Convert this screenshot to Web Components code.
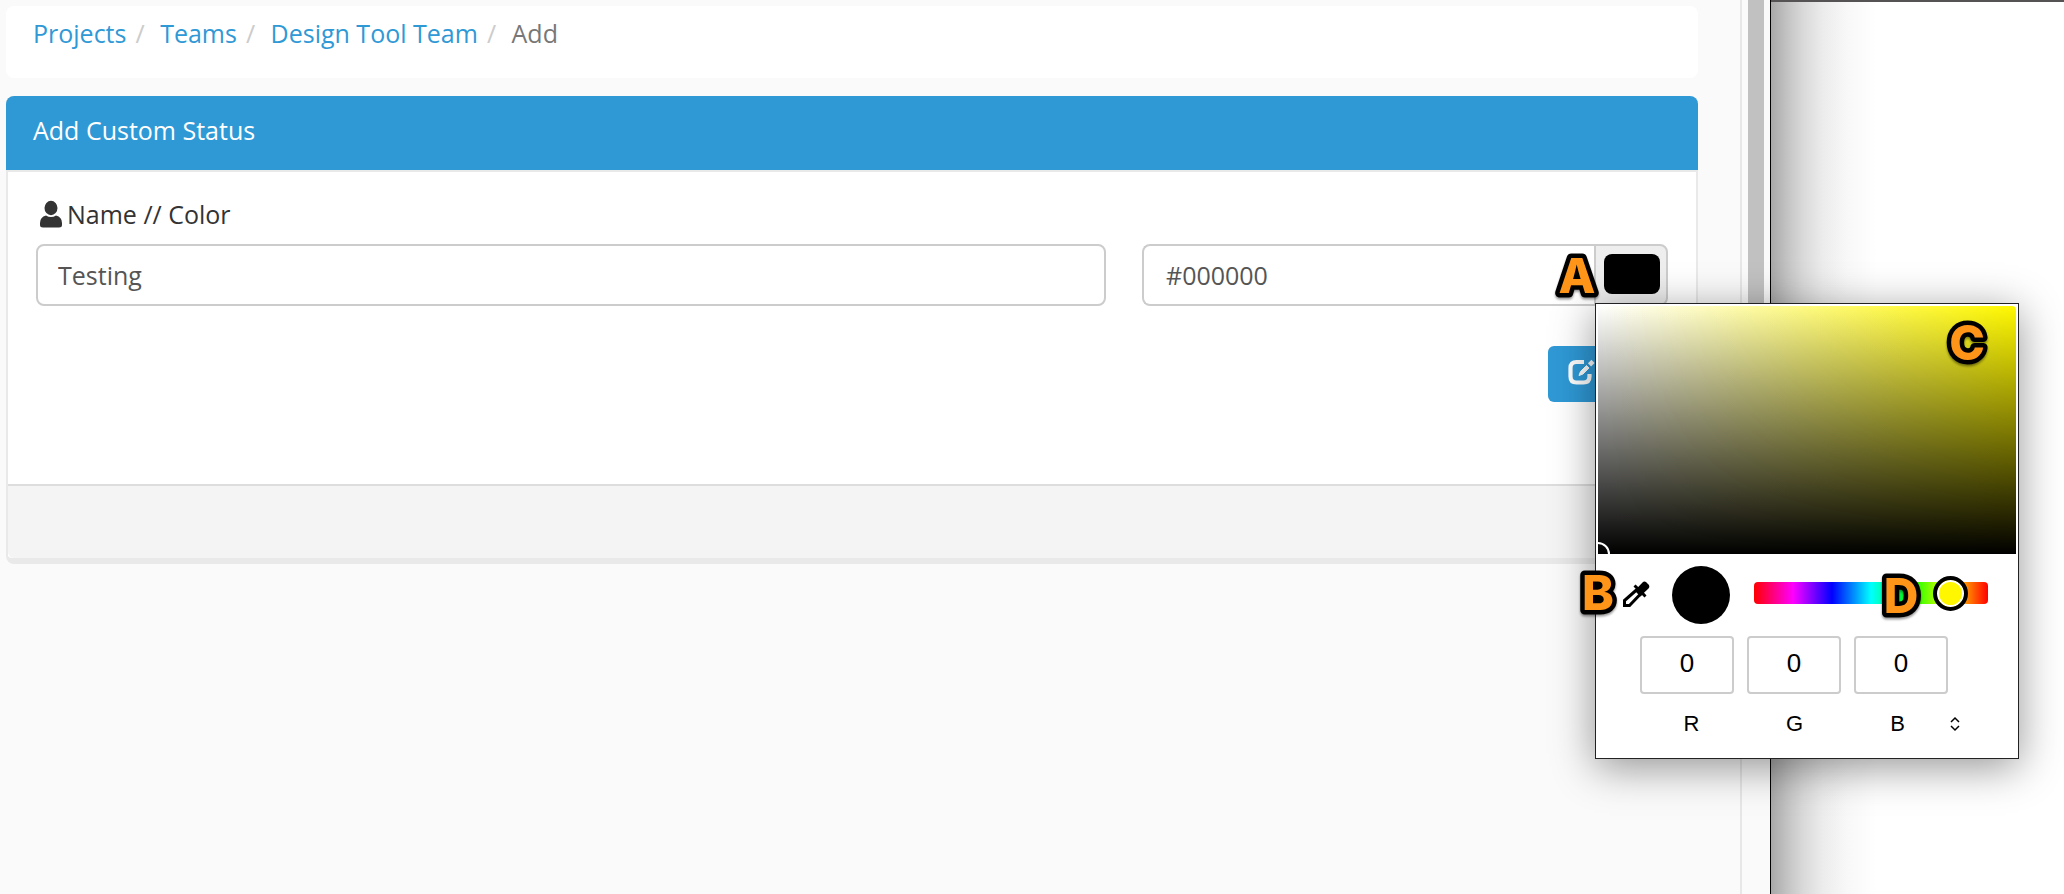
<!DOCTYPE html>
<html lang="en">
<head>
  <meta charset="UTF-8">
  <title>Add Custom Status</title>
  <style>
    body {
      margin: 0;
      background: #fff;
      font-family: "Open Sans", "Noto Sans", sans-serif;
      font-size: 25px;
      line-height: 36px;
      color: #333;
    }
  </style>
</head>
<body>
  <desktop-view>
    <bread-crumbs>
      <a href="#projects">Projects</a>
      <a href="#teams">Teams</a>
      <a href="#design">Design Tool Team</a>
      <span>Add</span>
    </bread-crumbs>
    <status-panel heading="Add Custom Status">
      <status-form></status-form>
    </status-panel>
  </desktop-view>

  <template id="desktop-view">
    <style>
      :host {
        display: flex;
        min-height: 100vh;
      }
      .window {
        flex: 1;
        display: flex;
        background: #fafafa;
        border-right: 1px solid #000;
      }
      main {
        flex: 1;
        display: flex;
        flex-direction: column;
        gap: 18px;
        padding: 6px 42px 30px 6px;
      }
      .scrollbar {
        width: 16px;
        padding: 0 6px;
        border-left: 2px solid #e7e7e7;
      }
      .thumb {
        height: 50vh;
        background: #c1c1c1;
      }
      .behind {
        width: 293px;
        border-top: 2px solid #555354;
        box-sizing: border-box;
        background: linear-gradient(90deg, #a8a8a8, #c3c3c3 16px, #d9d9d9 32px, #ececec 52px, #f8f8f8 76px, #fff 106px);
      }
    </style>
    <div class="window">
      <main><slot></slot></main>
      <div class="scrollbar"><div class="thumb"></div></div>
    </div>
    <div class="behind"></div>
  </template>

  <template id="bread-crumbs">
    <style>
      :host {
        display: block;
        background: #fff;
        border-radius: 8px;
        padding: 9px 27px 27px;
      }
      nav {
        display: flex;
      }
      ::slotted(a) {
        color: #2f99d6;
        text-decoration: none;
      }
      ::slotted(span) {
        color: #777;
      }
      i {
        padding: 0 9px;
        color: #ccc;
        font-style: normal;
      }
    </style>
    <nav aria-label="Breadcrumb"></nav>
  </template>

  <template id="status-panel">
    <style>
      :host {
        display: block;
        border: 2px solid #e9e9e9;
        border-top: 0;
        border-bottom-width: 6px;
        border-radius: 8px;
        background: #fff;
      }
      header {
        margin: 0 -2px;
        padding: 16px 27px 22px;
        background: #2f99d6;
        border-radius: 8px 8px 0 0;
        color: #fff;
      }
      h3 {
        margin: 0;
        font-size: 25px;
        font-weight: 400;
      }
      .body {
        border-top: 2px solid #e9e9e9;
        padding: 24px 28px 82px;
      }
      footer {
        height: 72px;
        background: #f4f4f4;
        border-top: 2px solid #ddd;
        border-radius: 0 0 6px 6px;
      }
    </style>
    <header><h3></h3></header>
    <div class="body"><slot></slot></div>
    <footer></footer>
  </template>

  <template id="status-form">
    <style>
      :host {
        display: block;
      }
      form {
        display: flex;
        flex-direction: column;
      }
      label {
        display: flex;
        align-items: center;
        gap: 5px;
        padding-left: 4px;
        margin-bottom: 12px;
      }
      .fields {
        display: grid;
        grid-template-columns: 1070fr 526fr;
        gap: 36px;
      }
      input {
        box-sizing: border-box;
        width: 100%;
        height: 62px;
        border: 2px solid #ccc;
        border-radius: 8px;
        padding: 0 20px;
        background: #fff;
        font: inherit;
        color: #555;
      }
      button {
        align-self: flex-end;
        display: flex;
        align-items: center;
        height: 56px;
        margin-top: 40px;
        padding: 0 20px;
        border: 0;
        border-radius: 6px;
        background: #2f99d6;
        color: #fff;
        font: inherit;
      }
      .edit {
        width: 28px;
        height: 28px;
        margin: 0 52px 4px 0;
      }
    </style>
    <form>
      <label for="name">
        <svg width="22" height="28" viewBox="0 0 22 28" fill="#333">
          <ellipse cx="11" cy="8" rx="6.5" ry="7.2"/>
          <path d="M6 15.500Q11 18.500 16 15.500Q22 17 22 23V25Q22 27.500 19 27.500H3Q0 27.500 0 25V23Q0 17 6 15.500Z"/>
        </svg>
        Name // Color
      </label>
      <div class="fields">
        <input id="name" type="text" value="Testing">
        <color-field value="#000000"></color-field>
      </div>
      <button type="button" aria-label="Add status">
        <svg class="edit" viewBox="0 0 28 28" fill="none" stroke="#fff">
          <path d="M16 4H8.500Q2.500 4 2.500 10V18.500Q2.500 24.500 8.500 24.500H15.500Q21.500 24.500 21.500 18.500V16" stroke-width="4.200"/>
          <path d="M11 17.500L12.500 13.500L18.500 7.500L21 10L15 16Z" fill="#fff" stroke-width="1"/>
          <path d="M21.500 6.800L25 3.300" stroke-width="4.500"/>
        </svg>
      </button>
    </form>
  </template>

  <template id="color-field">
    <style>
      :host {
        display: flex;
        position: relative;
      }
      input {
        flex: 1;
        min-width: 0;
        box-sizing: border-box;
        height: 62px;
        border: 2px solid #ccc;
        border-right: 0;
        border-radius: 8px 0 0 8px;
        padding: 0 20px 0 22px;
        background: #fff;
        font: inherit;
        color: #555;
      }
      .addon {
        position: relative;
        box-sizing: border-box;
        width: 74px;
        padding: 8px 6px 8px 8px;
        border: 2px solid #ccc;
        border-radius: 0 8px 8px 0;
        background: #eee;
      }
      button {
        display: block;
        width: 56px;
        height: 40px;
        border: 0;
        border-radius: 8px;
        background: #000;
      }
      /* popup hangs from the swatch, out over the window edge */
      color-picker {
        position: absolute;
        left: -1px;
        top: 57px;
        z-index: 2;
      }
      letter-mark {
        left: -49px;
        top: 3px;
      }
    </style>
    <input type="text" aria-label="Color">
    <div class="addon">
      <button type="button" aria-label="Pick a color"></button>
      <color-picker></color-picker>
      <letter-mark letter="A"></letter-mark>
    </div>
  </template>

  <template id="color-picker">
    <style>
      :host {
        display: block;
        box-sizing: border-box;
        width: 424px;
        height: 456px;
        padding: 2px;
        border: 1px solid #222;
        background: #fff;
        box-shadow: 0 8px 40px rgba(0, 0, 0, .42);
        font: 26px/30px "Liberation Sans", Arial, sans-serif;
        color: #000;
      }
      .shade {
        position: relative;
        overflow: hidden;
        height: 248px;
        border-radius: 4px 4px 0 0;
        background: linear-gradient(transparent, #000), linear-gradient(90deg, #fff, #fff700);
      }
      .handle {
        position: absolute;
        left: -12px;
        bottom: -12px;
        box-sizing: border-box;
        width: 24px;
        height: 24px;
        border: 2px solid #fff;
        border-radius: 50%;
      }
      .tools {
        display: flex;
        align-items: center;
        padding: 12px 28px 12px 23px;
      }
      .dropper {
        padding: 0;
        border: 0;
        background: none;
        width: 30px;
        height: 30px;
        margin-right: 21px;
      }
      .dropper svg {
        display: block;
      }
      .current {
        width: 58px;
        height: 58px;
        border-radius: 50%;
        background: #000;
        margin-right: 24px;
      }
      .hue {
        flex: 1;
        min-width: 0;
        height: 22px;
        margin: 0 0 4px;
        appearance: none;
        border-radius: 4px;
        background: linear-gradient(90deg, #f00, #f0f, #00f, #0ff, #0f0, #ff0, #f00);
      }
      .hue::-webkit-slider-thumb {
        appearance: none;
        width: 35px;
        height: 35px;
        border: 4px solid #000;
        border-radius: 50%;
        background: #fff700;
        box-shadow: inset 0 0 0 2px #fff;
      }
      .values {
        display: flex;
        gap: 13px;
        padding-left: 42px;
      }
      .values input {
        box-sizing: border-box;
        width: 94px;
        height: 58px;
        border: 2px solid #ccc;
        border-radius: 4px;
        padding: 0 0 4px;
        background: #fff;
        font: inherit;
        color: #000;
        text-align: center;
      }
      .names {
        display: grid;
        grid-template-columns: repeat(3, 103px) 12px;
        padding: 15px 0 0 42px;
        font-size: 22px;
        text-align: center;
      }
      .names button {
        display: flex;
        align-items: center;
        justify-content: center;
        padding: 0;
        border: 0;
        background: none;
      }
      .mark-b {
        left: -28px;
        top: 262px;
      }
      .mark-c {
        left: 341px;
        top: 12px;
      }
      .mark-d {
        left: 275px;
        top: 265px;
      }
    </style>
    <div class="shade"><div class="handle"></div></div>
    <div class="tools">
      <button class="dropper" type="button" aria-label="Eyedropper">
        <svg width="30" height="30" viewBox="0 0 30 30">
          <path d="M16 9.500L3.500 20.500V25.500H8.500L20 13.500" fill="#fff" stroke="#000" stroke-width="3"/>
          <path d="M12.500 6.500L14.500 4.500L17.200 7L21.500 2.500Q23 1 25 2L28 5Q29 7 27.500 8.500L23 12.800L25.500 15.500L23.500 17.500L21 15L19.500 16.500L13.500 10.500L15 9Z"/>
        </svg>
      </button>
      <div class="current"></div>
      <input class="hue" type="range" min="0" max="360" value="323" aria-label="Hue">
    </div>
    <div class="values">
      <input id="r" type="text" value="0">
      <input id="g" type="text" value="0">
      <input id="b" type="text" value="0">
    </div>
    <div class="names">
      <label for="r">R</label>
      <label for="g">G</label>
      <label for="b">B</label>
      <button type="button" aria-label="Change color format">
        <svg width="10" height="16" viewBox="0 0 10 16" fill="none" stroke="#000" stroke-width="1.500">
          <path d="M1 6L5 2L9 6M1 10L5 14L9 10"/>
        </svg>
      </button>
    </div>
    <letter-mark class="mark-b" letter="B"></letter-mark>
    <letter-mark class="mark-c" letter="C"></letter-mark>
    <letter-mark class="mark-d" letter="D"></letter-mark>
  </template>

  <template id="letter-mark">
    <style>
      :host {
        display: block;
        position: absolute;
        z-index: 3;
        pointer-events: none;
      }
      svg {
        display: block;
        overflow: visible;
        filter: drop-shadow(0 2px 1px rgba(0, 0, 0, .4));
      }
      text {
        font: 800 48px Inter, "Liberation Sans", sans-serif;
        text-anchor: middle;
        fill: #ff9518;
        stroke: #000;
        stroke-width: 9px;
        stroke-linejoin: round;
        paint-order: stroke;
      }
    </style>
    <svg width="60" height="52"><text x="30" y="44"></text></svg>
  </template>

  <script>
    class BaseElement extends HTMLElement {
      constructor() {
        super();
        const template = document.getElementById(this.localName);
        this.attachShadow({mode: 'open'});
        this.shadowRoot.appendChild(template.content.cloneNode(true));
      }
    }

    class DesktopView extends BaseElement {}
    class StatusForm extends BaseElement {}
    class ColorPicker extends BaseElement {}

    class LetterMark extends BaseElement {
      connectedCallback() {
        this.shadowRoot.querySelector('text').textContent = this.getAttribute('letter');
      }
    }

    class BreadCrumbs extends BaseElement {
      connectedCallback() {
        const nav = this.shadowRoot.querySelector('nav');
        Array.from(this.children).forEach((item, index) => {
          if (index > 0) {
            const separator = document.createElement('i');
            separator.textContent = '/\u00a0';
            nav.appendChild(separator);
          }
          const slot = document.createElement('slot');
          slot.name = 'item-' + index;
          item.slot = slot.name;
          nav.appendChild(slot);
        });
      }
    }

    class StatusPanel extends BaseElement {
      connectedCallback() {
        this.shadowRoot.querySelector('h3').textContent = this.getAttribute('heading');
      }
    }

    class ColorField extends BaseElement {
      connectedCallback() {
        this.shadowRoot.querySelector('input').value = this.getAttribute('value');
      }
    }

    window.customElements.define('letter-mark', LetterMark);
    window.customElements.define('color-picker', ColorPicker);
    window.customElements.define('color-field', ColorField);
    window.customElements.define('status-form', StatusForm);
    window.customElements.define('status-panel', StatusPanel);
    window.customElements.define('bread-crumbs', BreadCrumbs);
    window.customElements.define('desktop-view', DesktopView);
  </script>
</body>
</html>
